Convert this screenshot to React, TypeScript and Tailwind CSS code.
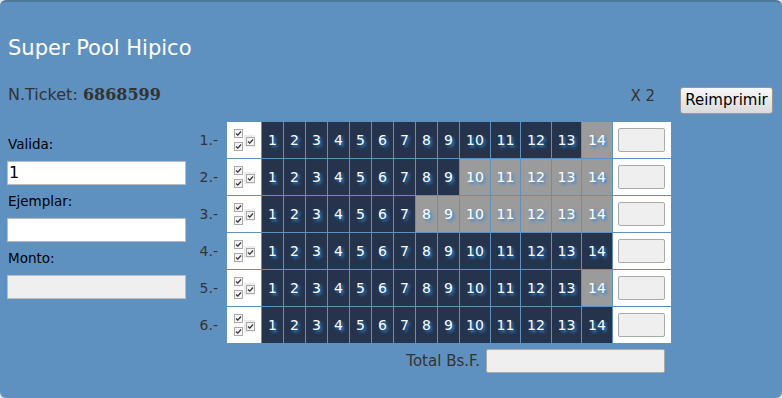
import React from "react";

const rows: { gray: number[] }[] = [
  { gray: [14] },
  { gray: [10, 11, 12, 13, 14] },
  { gray: [8, 9, 10, 11, 12, 13, 14] },
  { gray: [] },
  { gray: [14] },
  { gray: [] },
];

const widths = [21, 21, 21, 21, 21, 21, 21, 21, 21, 30, 29, 30, 29, 30];

function CheckIcon() {
  const box = (x: number, y: number) => (
    <g key={`${x}-${y}`}>
      <rect x={x + 0.5} y={y + 0.5} width={8} height={8} fill="#f4f4f4" stroke="#a9a9a9" />
      <path d={`M${x + 2} ${y + 4.5} L${x + 3.8} ${y + 6.2} L${x + 7} ${y + 2.5}`} fill="none" stroke="#333" strokeWidth={1.2} />
    </g>
  );
  return (
    <svg width="21" height="22" viewBox="0 0 21 22">
      <rect x="10" y="6" width="11" height="12" fill="#ececec" />
      {box(0, 0)}
      {box(0, 13)}
      {box(12, 8)}
    </svg>
  );
}

export default function App() {
  const font = { fontFamily: '"DejaVu Sans", Verdana, sans-serif' };
  return (
    <div className="w-[782px] h-[398px] bg-[#dfe6ee]" style={font}>
      <div className="h-full rounded-[6px] bg-[#5f91c0] border-t-2 border-[#4b7a9a] pl-[7px] pt-[34px]">
        <h1 className="text-[21px] leading-[24px] text-white pl-px">Super Pool Hipico</h1>
        <div className="flex items-start mt-[25px] h-[32px] mr-[9px]">
          <div className="text-[16px] leading-[20px] text-[#333] pl-px">
            N.Ticket:{" "}
            <span className="font-bold" style={{ fontFamily: '"DejaVu Serif", Georgia, serif' }}>
              6868599
            </span>
          </div>
          <div className="ml-auto mt-[2px] text-[15px] leading-[18px] text-[#333]">X 2</div>
          <button className="ml-[25px] mt-[2px] w-[93px] h-[27px] rounded-[3px] border border-[#999] bg-gradient-to-b from-[#f8f8f8] to-[#dadada] text-[15px] text-black leading-[25px] text-center">
            Reimprimir
          </button>
        </div>
        <div className="flex mt-[5px]">
          <div className="w-[179px] pt-[14px] text-[13.5px] leading-[16px] text-black">
            <div className="pl-px">Valida:</div>
            <div className="mt-[9px] h-[24px] bg-white border border-[#bbb] text-[16px] leading-[22px] pl-px">1</div>
            <div className="mt-[8px] pl-px">Ejemplar:</div>
            <div className="mt-[9px] h-[24px] bg-white border border-[#bbb]"></div>
            <div className="mt-[8px] pl-px">Monto:</div>
            <div className="mt-[9px] h-[24px] bg-[#efefef] border border-[#bbb]"></div>
          </div>
          <div className="flex flex-col">
            <div className="flex flex-col gap-px">
              {rows.map((r, i) => (
                <div key={i} className="flex h-[36px] gap-px">
                  <div className="w-[40px] pr-[8px] text-right text-[14px] text-[#333] leading-[36px]">{i + 1}.-</div>
                  <div className="w-[34px] bg-white flex items-center justify-center pl-[1px]">
                    <CheckIcon />
                  </div>
                  {widths.map((w, j) => {
                    const n = j + 1;
                    const gray = r.gray.includes(n);
                    return (
                      <div
                        key={j}
                        className={`${gray ? "bg-[#9b9b9b]" : "bg-[#25344c]"} flex items-center justify-center text-[14px] text-white [text-shadow:2px_2px_3px_#2a8be6]`}
                        style={{ width: w }}
                      >
                        {n}
                      </div>
                    );
                  })}
                  <div className="w-[58px] bg-white flex items-center pl-[5px]">
                    <div className="w-[47px] h-[24px] bg-[#efefef] border border-[#aaa] rounded-[2px]"></div>
                  </div>
                </div>
              ))}
            </div>
            <div className="flex justify-end items-center mt-[6px] pr-[6px]">
              <span className="text-[15px] text-[#333] mr-[6px]">Total Bs.F.</span>
              <div className="w-[179px] h-[24px] bg-[#efefef] border border-[#aaa] rounded-[2px]"></div>
            </div>
          </div>
        </div>
      </div>
    </div>
  );
}
